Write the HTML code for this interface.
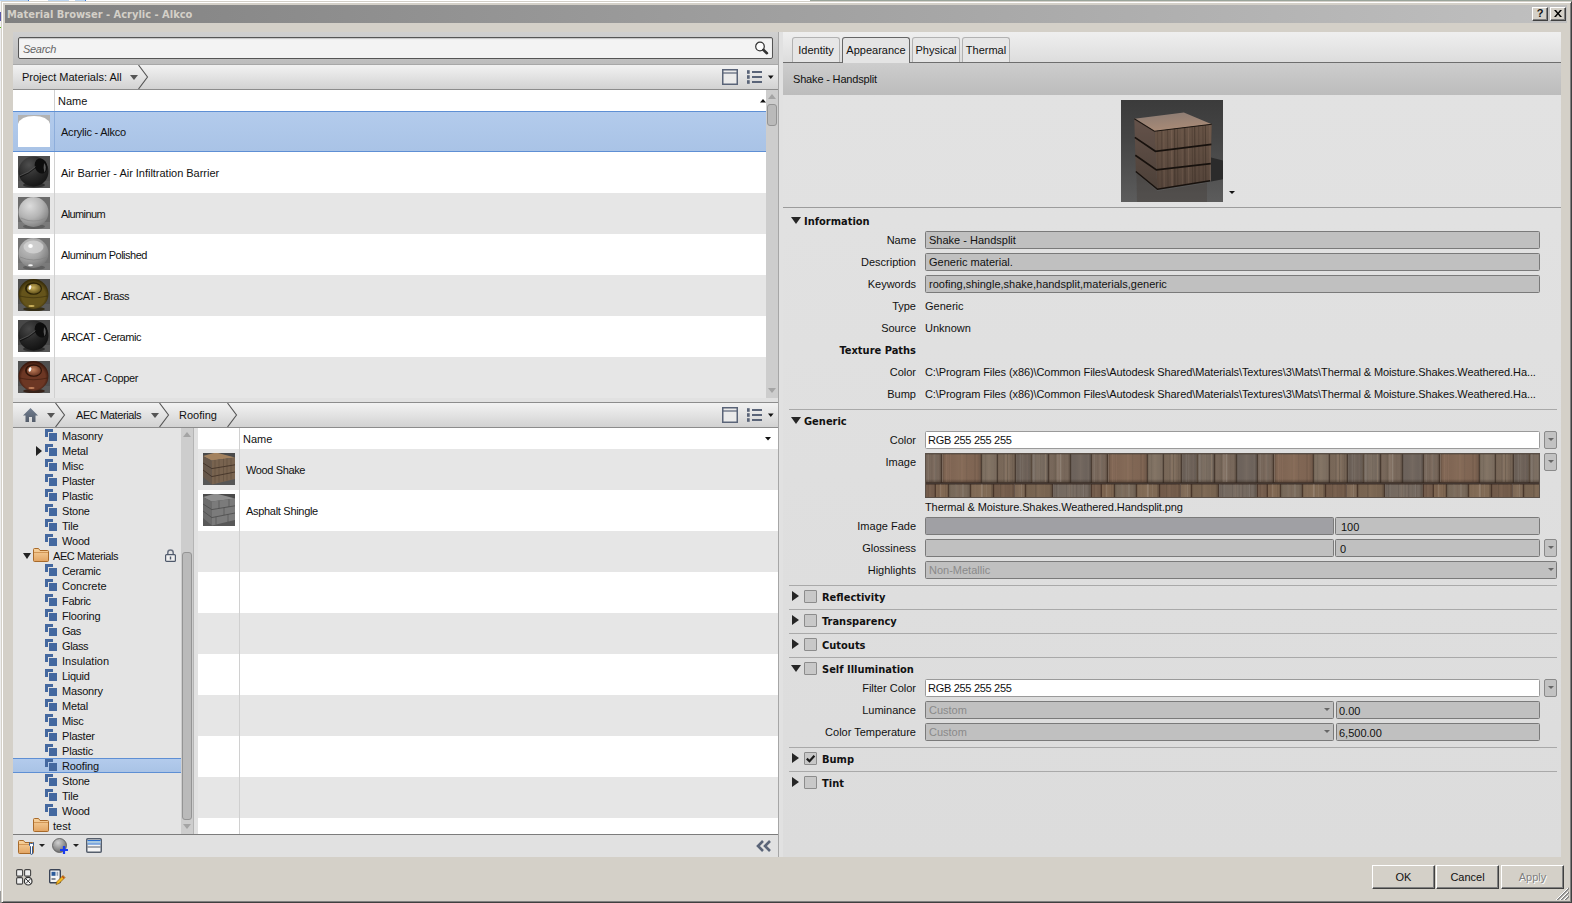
<!DOCTYPE html><html><head><meta charset="utf-8"><title>Material Browser</title><style>
*{box-sizing:border-box;margin:0;padding:0}
html,body{width:1572px;height:903px;overflow:hidden;background:#d4d0c8}
body{position:relative;font-family:"Liberation Sans",sans-serif;font-size:11px;color:#111;}
.a{position:absolute}
.t{position:absolute;height:16px;line-height:16px;white-space:nowrap}
.r{text-align:right}
.b{font-family:"DejaVu Sans Condensed","Liberation Sans",sans-serif;font-weight:bold;font-size:11px;margin-top:1px}
.fld{position:absolute;height:18px;border:1px solid #7a7a7a;border-radius:1.5px;background:#c0c0c0;line-height:17px;padding-left:3px;white-space:nowrap;overflow:hidden}
.wh{background:#fff;border-color:#9a9a9a;padding-left:2px;letter-spacing:-0.3px}
.dim{color:#8a8a8a}
.dd{position:absolute;width:13px;height:18px;border:1px solid #8a8a8a;border-radius:2px;background:#c2c2c2}
.dd:after,.arr:after{content:"";position:absolute;left:3px;top:6px;border:3px solid transparent;border-top:3px solid #666;border-bottom:0}
.arr{position:absolute;width:11px;height:16px}
.hl{position:absolute;height:1px;background:#a9a9a9}
.cb{position:absolute;width:13px;height:13px;border:1px solid #8c8c8c;border-radius:1px;background:#c8c8c8}
.tri-d{position:absolute;width:0;height:0;border-left:4.5px solid transparent;border-right:4.5px solid transparent;border-top:7px solid #222}
.tri-r{position:absolute;width:0;height:0;border-top:5px solid transparent;border-bottom:5px solid transparent;border-left:7px solid #222}
.row{position:absolute;height:41px}
.g{background:#e6e6e6}
.w{background:#fff}
.tab{position:absolute;top:37px;height:25px;border:1px solid #b2b2b2;border-bottom:0;border-radius:3px 3px 0 0;background:#e6e6e6;text-align:center;line-height:25px}
.btn{position:absolute;top:865px;width:63px;height:24px;background:#d4d0c8;border:1px solid;border-color:#fff #404040 #404040 #fff;box-shadow:inset -1px -1px 0 #808080;text-align:center;line-height:23px}
.ti{position:absolute;width:12px;height:12px}
.ti:before{content:"";position:absolute;left:0;top:0;width:5px;height:5px;border-left:3px solid #44689f;border-top:3px solid #44689f}
.ti:after{content:"";position:absolute;left:4px;top:4px;width:8px;height:8px;background:#44689f}
</style></head><body>
<div class="a" style="left:0px;top:0px;width:1572px;height:1px;background:linear-gradient(90deg,#bcd6f2 0,#bcd6f2 28px,#3a7ad8 28px,#3a7ad8 29px,#fff 29px,#fff 48px,#bcd6f2 48px,#bcd6f2 69px,#fff 69px,#fff 75px,#bcd6f2 75px,#bcd6f2 85px,#3a7ad8 85px,#3a7ad8 86px,#fff 86px,#fff 810px,#9aa49a 810px)"></div>
<div class="a" style="left:0px;top:1px;width:1px;height:902px;background:linear-gradient(#f4f4f4 0,#f4f4f4 11px,#5a58a8 11px,#5a58a8 20px,#f4f4f4 20px,#f4f4f4 26px,#5ac01a 26px,#5ac01a 27px,#eee 27px,#eee 890px,#999 890px)"></div>
<div class="a" style="left:1px;top:1px;width:1571px;height:902px;background:#d4d0c8;border:1px solid;border-color:#d4d0c8 #404040 #404040 #d4d0c8;box-shadow:inset 1px 1px 0 #fff,inset -1px -1px 0 #808080"></div>
<div class="a" style="left:5px;top:5px;width:1562px;height:18px;background:linear-gradient(90deg,#808080,#c0c0c0)"></div>
<div class="t b" style="left:7px;top:6px;color:#d4d0c8;font-size:11px">Material Browser - Acrylic - Alkco</div>
<div class="a" style="left:1532px;top:7px;width:16px;height:14px;background:#d4d0c8;border:1px solid;border-color:#fff #404040 #404040 #fff;box-shadow:inset -1px -1px 0 #808080;font:bold 11px/11px 'Liberation Sans',sans-serif;text-align:center">?</div>
<div class="a" style="left:1550px;top:7px;width:16px;height:14px;background:#d4d0c8;border:1px solid;border-color:#fff #404040 #404040 #fff;box-shadow:inset -1px -1px 0 #808080;font:bold 11px/11px 'Liberation Sans',sans-serif;text-align:center"></div>
<svg class="a" style="left:1554px;top:10px" width="8" height="7" viewBox="0 0 8 7"><path d="M0 0h2l2 2.5L6 0h2L5 3.5 8 7H6L4 4.5 2 7H0l3-3.5z" fill="#000"/></svg>
<div class="a" style="left:13px;top:32px;width:1548px;height:825px;background:#e1e1e1"></div>
<div class="a" style="left:13px;top:32px;width:766px;height:33px;background:linear-gradient(#d0d0d0,#bcbcbc)"></div>
<div class="a" style="left:18px;top:37px;width:755px;height:22px;background:#f3f3f3;border:1px solid #555;border-radius:2px;box-shadow:inset 0 1px 1px #c4c4c4"></div>
<div class="t " style="left:23px;top:41px;font-style:italic;color:#666;letter-spacing:-0.3px">Search</div>
<svg class="a" style="left:754px;top:41px" width="16" height="15" viewBox="0 0 16 15"><circle cx="6" cy="5.5" r="4.3" fill="#fdfdfd" stroke="#333" stroke-width="1.2"/><path d="M9.3 8.8l3.6 3.4" stroke="#333" stroke-width="2.6" stroke-linecap="round"/></svg>
<div class="a" style="left:13px;top:64px;width:766px;height:1px;background:#a8a8a8"></div>
<div class="a" style="left:13px;top:65px;width:766px;height:24px;background:linear-gradient(#f2f2f2,#e4e4e4 45%,#d2d2d2)"></div>
<div class="a" style="left:13px;top:89px;width:766px;height:1px;background:#8c8c8c"></div>
<div class="t " style="left:22px;top:69px;">Project Materials: All</div>
<svg class="a" style="left:130px;top:75px" width="8" height="5" viewBox="0 0 8 5"><path d="M0 0h8l-4.0 5z" fill="#555"/></svg>
<svg class="a" style="left:138px;top:65px" width="11" height="24" viewBox="0 0 11 24"><path d="M0.5 0L9.5 12.0 0.5 24" fill="none" stroke="#555" stroke-width="1.1"/></svg>
<svg class="a" style="left:722px;top:69px" width="54" height="16" viewBox="0 0 54 16"><rect x="0.75" y="0.75" width="14.5" height="14.5" fill="#ebebeb" stroke="#5a6478" stroke-width="1.5"/><rect x="1" y="3.4" width="14" height="1.2" fill="#5a6478"/><rect x="25" y="1.2" width="2.7" height="3.6" fill="#5a6478"/><rect x="30" y="2.0" width="10" height="2" fill="#5a6478"/><rect x="25" y="6.2" width="2.7" height="3.6" fill="#5a6478"/><rect x="30" y="7.0" width="10" height="2" fill="#5a6478"/><rect x="25" y="11.2" width="2.7" height="3.6" fill="#5a6478"/><rect x="30" y="12.0" width="10" height="2" fill="#5a6478"/><path d="M46 6.5h5.6l-2.8 3.4z" fill="#111"/></svg>
<div class="a" style="left:13px;top:90px;width:753px;height:21px;background:#fff"></div>
<div class="a" style="left:54px;top:90px;width:1px;height:308px;background:#d0d0d0"></div>
<div class="t " style="left:58px;top:93px;">Name</div>
<svg class="a" style="left:760px;top:99px" width="6" height="3.5" viewBox="0 0 6 3.5"><path d="M0 3.5h6L3 0z" fill="#111"/></svg>
<div class="a" style="left:13px;top:111px;width:753px;height:41px;background:linear-gradient(#b3cbec,#a9c3e6);border-top:1px solid #5e8fd4;border-bottom:1px solid #5e8fd4"></div>
<div class="a" style="left:54px;top:112px;width:1px;height:39px;background:#8eaedb"></div>
<svg class="a" style="left:18px;top:115px" width="32" height="32" viewBox="0 0 32 32"><rect width="32" height="32" fill="#b2b2b2"/><path d="M0 32V9Q2.5 1 16 1T32 9V32z" fill="#fff"/></svg>
<div class="t " style="left:61px;top:124px;letter-spacing:-0.23px">Acrylic - Alkco</div>
<div class="a" style="left:13px;top:152px;width:753px;height:41px;background:#fff"></div>
<div class="a" style="left:54px;top:152px;width:1px;height:41px;background:#d0d0d0"></div>
<svg class="a" style="left:18px;top:156px" width="32" height="32" viewBox="0 0 32 32"><defs><radialGradient id="gdark156" cx="35%" cy="28%" r="75%"><stop offset="0" stop-color="#4e4e4e"/><stop offset="0.55" stop-color="#2b2b2b"/><stop offset="1" stop-color="#161616"/></radialGradient></defs><rect width="32" height="32" fill="#4d4d4d"/><rect y="25" width="32" height="7" fill="#565656"/><ellipse cx="16" cy="29" rx="11" ry="2.5" fill="#2c2c2c"/><circle cx="15.5" cy="15.5" r="15" fill="url(#gdark156)"/><ellipse cx="23" cy="10" rx="6.2" ry="7.6" fill="#0d0d0d" transform="rotate(-20 23 10)"/><path d="M26 7Q29.5 11 26.5 16.5Q25 12 26 7z" fill="#5a5a5a"/><path d="M1.5 20Q11 16.5 17.5 10.5" stroke="#5a5a5a" stroke-width="0.7" fill="none"/><path d="M2 21Q11.5 17.5 18 11.5" stroke="#0a0a0a" stroke-width="0.7" fill="none"/></svg>
<div class="t " style="left:61px;top:165px;letter-spacing:-0.02px">Air Barrier - Air Infiltration Barrier</div>
<div class="a" style="left:13px;top:193px;width:753px;height:41px;background:#e6e6e6"></div>
<div class="a" style="left:54px;top:193px;width:1px;height:41px;background:#d0d0d0"></div>
<svg class="a" style="left:18px;top:197px" width="32" height="32" viewBox="0 0 32 32"><defs><radialGradient id="galu197" cx="38%" cy="30%" r="75%"><stop offset="0" stop-color="#dcdcdc"/><stop offset="0.55" stop-color="#b4b4b4"/><stop offset="1" stop-color="#7e7e7e"/></radialGradient></defs><rect width="32" height="32" fill="#6b6b6b"/><rect y="25" width="32" height="7" fill="#7a7a7a"/><ellipse cx="16" cy="29.5" rx="11" ry="2.5" fill="#5e5e5e"/><circle cx="15.5" cy="15" r="15" fill="url(#galu197)"/><path d="M2.5 21Q15.5 27 28.5 21" stroke="#8a8a8a" stroke-width="1.2" fill="none" opacity="0.7"/></svg>
<div class="t " style="left:61px;top:206px;letter-spacing:-0.61px">Aluminum</div>
<div class="a" style="left:13px;top:234px;width:753px;height:41px;background:#fff"></div>
<div class="a" style="left:54px;top:234px;width:1px;height:41px;background:#d0d0d0"></div>
<svg class="a" style="left:18px;top:238px" width="32" height="32" viewBox="0 0 32 32"><defs><radialGradient id="gpol238" cx="38%" cy="30%" r="75%"><stop offset="0" stop-color="#c4c4c4"/><stop offset="0.55" stop-color="#a4a4a4"/><stop offset="1" stop-color="#767676"/></radialGradient></defs><rect width="32" height="32" fill="#727272"/><rect y="25" width="32" height="7" fill="#7a7a7a"/><ellipse cx="16" cy="29.5" rx="11" ry="2.5" fill="#5e5e5e"/><circle cx="15.5" cy="15" r="15" fill="url(#gpol238)"/><ellipse cx="15.5" cy="9" rx="10" ry="6.5" fill="#d6d6d6" opacity="0.75"/><ellipse cx="12.5" cy="8" rx="2.3" ry="2" fill="#fff"/><ellipse cx="12.5" cy="27.3" rx="2.4" ry="1" fill="#f4f4f4"/><path d="M2 19Q15.5 25 29 19" stroke="#808080" stroke-width="1" fill="none" opacity="0.6"/></svg>
<div class="t " style="left:61px;top:247px;letter-spacing:-0.48px">Aluminum Polished</div>
<div class="a" style="left:13px;top:275px;width:753px;height:41px;background:#e6e6e6"></div>
<div class="a" style="left:54px;top:275px;width:1px;height:41px;background:#d0d0d0"></div>
<svg class="a" style="left:18px;top:279px" width="32" height="32" viewBox="0 0 32 32"><defs><radialGradient id="gbrass279" cx="50%" cy="55%" r="52%"><stop offset="0" stop-color="#65541b"/><stop offset="0.75" stop-color="#65541b"/><stop offset="1" stop-color="#382d09"/></radialGradient><radialGradient id="hbrass279" cx="45%" cy="40%" r="60%"><stop offset="0" stop-color="#ccb25e"/><stop offset="1" stop-color="#65541b"/></radialGradient></defs><rect width="32" height="32" fill="#4f4f4f"/><rect y="25" width="32" height="7" fill="#5a5a5a"/><ellipse cx="16" cy="30" rx="11" ry="2.2" fill="#2b2206" opacity="0.8"/><circle cx="15.5" cy="15" r="15" fill="url(#gbrass279)"/><ellipse cx="15.5" cy="9.5" rx="8.5" ry="6.3" fill="#2b2206"/><ellipse cx="15.8" cy="9.7" rx="7" ry="5" fill="url(#hbrass279)"/><ellipse cx="12" cy="8.5" rx="1.3" ry="2.4" fill="#fff" transform="rotate(15 12 8.5)"/><path d="M1.5 17Q15.5 20.5 29.5 17" stroke="#2b2206" stroke-width="1.2" fill="none" opacity="0.45"/><ellipse cx="13.5" cy="27" rx="3.2" ry="1" fill="#ccb25e"/></svg>
<div class="t " style="left:61px;top:288px;letter-spacing:-0.47px">ARCAT - Brass</div>
<div class="a" style="left:13px;top:316px;width:753px;height:41px;background:#fff"></div>
<div class="a" style="left:54px;top:316px;width:1px;height:41px;background:#d0d0d0"></div>
<svg class="a" style="left:18px;top:320px" width="32" height="32" viewBox="0 0 32 32"><defs><radialGradient id="gcer320" cx="35%" cy="28%" r="75%"><stop offset="0" stop-color="#474747"/><stop offset="0.55" stop-color="#252525"/><stop offset="1" stop-color="#121212"/></radialGradient></defs><rect width="32" height="32" fill="#474747"/><rect y="25" width="32" height="7" fill="#565656"/><ellipse cx="16" cy="29" rx="11" ry="2.5" fill="#2c2c2c"/><circle cx="15.5" cy="15.5" r="15" fill="url(#gcer320)"/><ellipse cx="23" cy="10" rx="6.2" ry="7.6" fill="#0d0d0d" transform="rotate(-20 23 10)"/><path d="M26 7Q29.5 11 26.5 16.5Q25 12 26 7z" fill="#5a5a5a"/><path d="M1.5 20Q11 16.5 17.5 10.5" stroke="#5a5a5a" stroke-width="0.7" fill="none"/><path d="M2 21Q11.5 17.5 18 11.5" stroke="#0a0a0a" stroke-width="0.7" fill="none"/></svg>
<div class="t " style="left:61px;top:329px;letter-spacing:-0.47px">ARCAT - Ceramic</div>
<div class="a" style="left:13px;top:357px;width:753px;height:41px;background:#e6e6e6"></div>
<div class="a" style="left:54px;top:357px;width:1px;height:41px;background:#d0d0d0"></div>
<svg class="a" style="left:18px;top:361px" width="32" height="32" viewBox="0 0 32 32"><defs><radialGradient id="gcop361" cx="50%" cy="55%" r="52%"><stop offset="0" stop-color="#6c3724"/><stop offset="0.75" stop-color="#6c3724"/><stop offset="1" stop-color="#3a180d"/></radialGradient><radialGradient id="hcop361" cx="45%" cy="40%" r="60%"><stop offset="0" stop-color="#c07f5b"/><stop offset="1" stop-color="#6c3724"/></radialGradient></defs><rect width="32" height="32" fill="#4f4f4f"/><rect y="25" width="32" height="7" fill="#5a5a5a"/><ellipse cx="16" cy="30" rx="11" ry="2.2" fill="#2e1409" opacity="0.8"/><circle cx="15.5" cy="15" r="15" fill="url(#gcop361)"/><ellipse cx="15.5" cy="9.5" rx="8.5" ry="6.3" fill="#2e1409"/><ellipse cx="15.8" cy="9.7" rx="7" ry="5" fill="url(#hcop361)"/><ellipse cx="12" cy="8.5" rx="1.3" ry="2.4" fill="#fff" transform="rotate(15 12 8.5)"/><path d="M1.5 17Q15.5 20.5 29.5 17" stroke="#2e1409" stroke-width="1.2" fill="none" opacity="0.45"/><ellipse cx="13.5" cy="27" rx="3.2" ry="1" fill="#c07f5b"/></svg>
<div class="t " style="left:61px;top:370px;letter-spacing:-0.37px">ARCAT - Copper</div>
<div class="a" style="left:766px;top:90px;width:12px;height:308px;background:#cdcdcd"></div>
<svg class="a" style="left:768px;top:94px" width="8" height="5" viewBox="0 0 8 5"><path d="M0 5h8L4 0z" fill="#a4a4a4"/></svg>
<svg class="a" style="left:768px;top:388px" width="8" height="5" viewBox="0 0 8 5"><path d="M0 0h8L4 5z" fill="#a4a4a4"/></svg>
<div class="a" style="left:767px;top:104px;width:10px;height:22px;background:#bababa;border:1px solid #949494;border-radius:3px"></div>
<div class="a" style="left:13px;top:402px;width:766px;height:1px;background:#8c8c8c"></div>
<div class="a" style="left:13px;top:403px;width:766px;height:24px;background:linear-gradient(#f2f2f2,#e4e4e4 45%,#d2d2d2)"></div>
<div class="a" style="left:13px;top:427px;width:766px;height:1px;background:#8c8c8c"></div>
<svg class="a" style="left:23px;top:408px" width="15" height="14" viewBox="0 0 15 14"><defs><linearGradient id="hg" x1="0" y1="0" x2="0" y2="1"><stop offset="0" stop-color="#727e90"/><stop offset="1" stop-color="#535c6a"/></linearGradient></defs><path d="M7.5 0L15 7.5H12.5V14H9V9H6V14H2.5V7.5H0z" fill="url(#hg)"/></svg>
<svg class="a" style="left:47px;top:413px" width="8" height="5" viewBox="0 0 8 5"><path d="M0 0h8l-4.0 5z" fill="#555"/></svg>
<svg class="a" style="left:55px;top:403px" width="11" height="24" viewBox="0 0 11 24"><path d="M0.5 0L9.5 12.0 0.5 24" fill="none" stroke="#555" stroke-width="1.1"/></svg>
<div class="t " style="left:76px;top:407px;letter-spacing:-0.4px">AEC Materials</div>
<svg class="a" style="left:151px;top:413px" width="8" height="5" viewBox="0 0 8 5"><path d="M0 0h8l-4.0 5z" fill="#555"/></svg>
<svg class="a" style="left:159px;top:403px" width="11" height="24" viewBox="0 0 11 24"><path d="M0.5 0L9.5 12.0 0.5 24" fill="none" stroke="#555" stroke-width="1.1"/></svg>
<div class="t " style="left:179px;top:407px;">Roofing</div>
<svg class="a" style="left:227px;top:403px" width="11" height="24" viewBox="0 0 11 24"><path d="M0.5 0L9.5 12.0 0.5 24" fill="none" stroke="#555" stroke-width="1.1"/></svg>
<svg class="a" style="left:722px;top:407px" width="54" height="16" viewBox="0 0 54 16"><rect x="0.75" y="0.75" width="14.5" height="14.5" fill="#ebebeb" stroke="#5a6478" stroke-width="1.5"/><rect x="1" y="3.4" width="14" height="1.2" fill="#5a6478"/><rect x="25" y="1.2" width="2.7" height="3.6" fill="#5a6478"/><rect x="30" y="2.0" width="10" height="2" fill="#5a6478"/><rect x="25" y="6.2" width="2.7" height="3.6" fill="#5a6478"/><rect x="30" y="7.0" width="10" height="2" fill="#5a6478"/><rect x="25" y="11.2" width="2.7" height="3.6" fill="#5a6478"/><rect x="30" y="12.0" width="10" height="2" fill="#5a6478"/><path d="M46 6.5h5.6l-2.8 3.4z" fill="#111"/></svg>
<div class="a" style="left:13px;top:428px;width:168px;height:406px;background:#e4e4e4"></div>
<div class="ti" style="left:45px;top:429px"></div>
<div class="t " style="left:62px;top:428px;letter-spacing:-0.2px">Masonry</div>
<div class="ti" style="left:45px;top:444px"></div>
<div class="t " style="left:62px;top:443px;letter-spacing:-0.2px">Metal</div>
<div class="tri-r" style="left:36px;top:446px;border-left-width:6px"></div>
<div class="ti" style="left:45px;top:459px"></div>
<div class="t " style="left:62px;top:458px;letter-spacing:-0.3px">Misc</div>
<div class="ti" style="left:45px;top:474px"></div>
<div class="t " style="left:62px;top:473px;letter-spacing:-0.2px">Plaster</div>
<div class="ti" style="left:45px;top:489px"></div>
<div class="t " style="left:62px;top:488px;letter-spacing:-0.2px">Plastic</div>
<div class="ti" style="left:45px;top:504px"></div>
<div class="t " style="left:62px;top:503px;letter-spacing:-0.2px">Stone</div>
<div class="ti" style="left:45px;top:519px"></div>
<div class="t " style="left:62px;top:518px;letter-spacing:-0.2px">Tile</div>
<div class="ti" style="left:45px;top:534px"></div>
<div class="t " style="left:62px;top:533px;letter-spacing:-0.2px">Wood</div>
<svg class="a" style="left:33px;top:548px" width="16" height="14" viewBox="0 0 16 14"><defs><linearGradient id="fg33548" x1="0" y1="0" x2="0" y2="1"><stop offset="0" stop-color="#f8d4a0"/><stop offset="1" stop-color="#e2a462"/></linearGradient></defs><path d="M0.5 1.5Q0.5 0.5 1.5 0.5H5.5L7 2.5H14.5Q15.5 2.5 15.5 3.5V12.5Q15.5 13.5 14.5 13.5H1.5Q0.5 13.5 0.5 12.5z" fill="url(#fg33548)" stroke="#a86a2a" stroke-width="1"/><path d="M1 4.5H15" stroke="#c98a48" stroke-width="0.8"/></svg>
<div class="t " style="left:53px;top:548px;letter-spacing:-0.4px">AEC Materials</div>
<div class="tri-d" style="left:23px;top:553px;border-left-width:4.5px;border-right-width:4.5px;border-top-width:6px"></div>
<div class="ti" style="left:45px;top:564px"></div>
<div class="t " style="left:62px;top:563px;letter-spacing:-0.33px">Ceramic</div>
<div class="ti" style="left:45px;top:579px"></div>
<div class="t " style="left:62px;top:578px;letter-spacing:0px">Concrete</div>
<div class="ti" style="left:45px;top:594px"></div>
<div class="t " style="left:62px;top:593px;letter-spacing:-0.3px">Fabric</div>
<div class="ti" style="left:45px;top:609px"></div>
<div class="t " style="left:62px;top:608px;letter-spacing:-0.15px">Flooring</div>
<div class="ti" style="left:45px;top:624px"></div>
<div class="t " style="left:62px;top:623px;letter-spacing:-0.5px">Gas</div>
<div class="ti" style="left:45px;top:639px"></div>
<div class="t " style="left:62px;top:638px;letter-spacing:-0.4px">Glass</div>
<div class="ti" style="left:45px;top:654px"></div>
<div class="t " style="left:62px;top:653px;letter-spacing:0px">Insulation</div>
<div class="ti" style="left:45px;top:669px"></div>
<div class="t " style="left:62px;top:668px;letter-spacing:-0.3px">Liquid</div>
<div class="ti" style="left:45px;top:684px"></div>
<div class="t " style="left:62px;top:683px;letter-spacing:-0.2px">Masonry</div>
<div class="ti" style="left:45px;top:699px"></div>
<div class="t " style="left:62px;top:698px;letter-spacing:-0.2px">Metal</div>
<div class="ti" style="left:45px;top:714px"></div>
<div class="t " style="left:62px;top:713px;letter-spacing:-0.3px">Misc</div>
<div class="ti" style="left:45px;top:729px"></div>
<div class="t " style="left:62px;top:728px;letter-spacing:-0.2px">Plaster</div>
<div class="ti" style="left:45px;top:744px"></div>
<div class="t " style="left:62px;top:743px;letter-spacing:-0.2px">Plastic</div>
<div class="a" style="left:13px;top:758px;width:168px;height:15px;background:linear-gradient(#b3cbec,#a9c3e6);border-top:1px solid #5e8fd4;border-bottom:1px solid #5e8fd4"></div>
<div class="ti" style="left:45px;top:759px"></div>
<div class="t " style="left:62px;top:758px;letter-spacing:-0.13px">Roofing</div>
<div class="ti" style="left:45px;top:774px"></div>
<div class="t " style="left:62px;top:773px;letter-spacing:-0.2px">Stone</div>
<div class="ti" style="left:45px;top:789px"></div>
<div class="t " style="left:62px;top:788px;letter-spacing:-0.2px">Tile</div>
<div class="ti" style="left:45px;top:804px"></div>
<div class="t " style="left:62px;top:803px;letter-spacing:-0.2px">Wood</div>
<svg class="a" style="left:33px;top:818px" width="16" height="14" viewBox="0 0 16 14"><defs><linearGradient id="fg33818" x1="0" y1="0" x2="0" y2="1"><stop offset="0" stop-color="#f8d4a0"/><stop offset="1" stop-color="#e2a462"/></linearGradient></defs><path d="M0.5 1.5Q0.5 0.5 1.5 0.5H5.5L7 2.5H14.5Q15.5 2.5 15.5 3.5V12.5Q15.5 13.5 14.5 13.5H1.5Q0.5 13.5 0.5 12.5z" fill="url(#fg33818)" stroke="#a86a2a" stroke-width="1"/><path d="M1 4.5H15" stroke="#c98a48" stroke-width="0.8"/></svg>
<div class="t " style="left:53px;top:818px;">test</div>
<svg class="a" style="left:165px;top:549px" width="11" height="13" viewBox="0 0 11 13"><path d="M2.8 6V3.6Q2.8 1 5.5 1T8.2 3.6V6" fill="none" stroke="#6a7282" stroke-width="1.5"/><rect x="0.6" y="5.6" width="9.8" height="6.8" rx="1" fill="#f0f0f0" stroke="#4e586a" stroke-width="1.2"/><path d="M5.5 7.5v3" stroke="#4e586a" stroke-width="1.4"/></svg>
<div class="a" style="left:181px;top:428px;width:12px;height:406px;background:#cdcdcd"></div>
<svg class="a" style="left:183px;top:432px" width="8" height="5" viewBox="0 0 8 5"><path d="M0 5h8L4 0z" fill="#a4a4a4"/></svg>
<svg class="a" style="left:183px;top:824px" width="8" height="5" viewBox="0 0 8 5"><path d="M0 0h8L4 5z" fill="#a4a4a4"/></svg>
<div class="a" style="left:182px;top:552px;width:10px;height:268px;background:#bababa;border:1px solid #949494;border-radius:3px"></div>
<div class="a" style="left:193px;top:428px;width:5px;height:406px;background:#e1e1e1;border-left:1px solid #b4b4b4"></div>
<div class="a" style="left:198px;top:428px;width:581px;height:21px;background:#fff"></div>
<div class="t " style="left:243px;top:431px;">Name</div>
<svg class="a" style="left:765px;top:437px" width="6" height="3.5" viewBox="0 0 6 3.5"><path d="M0 0h6L3 3.5z" fill="#111"/></svg>
<div class="a" style="left:198px;top:449px;width:581px;height:41px;background:#e6e6e6"></div>
<div class="a" style="left:198px;top:490px;width:581px;height:41px;background:#fff"></div>
<div class="a" style="left:198px;top:531px;width:581px;height:41px;background:#e6e6e6"></div>
<div class="a" style="left:198px;top:572px;width:581px;height:41px;background:#fff"></div>
<div class="a" style="left:198px;top:613px;width:581px;height:41px;background:#e6e6e6"></div>
<div class="a" style="left:198px;top:654px;width:581px;height:41px;background:#fff"></div>
<div class="a" style="left:198px;top:695px;width:581px;height:41px;background:#e6e6e6"></div>
<div class="a" style="left:198px;top:736px;width:581px;height:41px;background:#fff"></div>
<div class="a" style="left:198px;top:777px;width:581px;height:41px;background:#e6e6e6"></div>
<div class="a" style="left:198px;top:818px;width:581px;height:16px;background:#fff"></div>
<div class="a" style="left:239px;top:428px;width:1px;height:406px;background:#d0d0d0"></div>
<svg class="a" style="left:203px;top:453px" width="32" height="32" viewBox="0 0 32 32"><rect width="32" height="32" fill="#565656"/><path d="M0 0H10L0 3z" fill="#4a4a4a"/><path d="M14 0H32V4.6z" fill="#4a4a4a"/><path d="M0 3L11 0H15L32 4.6 8.6 7.6z" fill="#a3825f"/><path d="M0 3L8.6 7.6 9 31.4 0 24z" fill="#66574a"/><path d="M8.6 7.6L32 4.6V26L9 31.4z" fill="#78634f"/><path d="M0 10L8.8 15.6L32 11.8" stroke="#3a2c22" stroke-width="0.9" fill="none" opacity="0.85"/><path d="M0 17L8.8 23.6L32 19.0" stroke="#3a2c22" stroke-width="0.9" fill="none" opacity="0.85"/><path d="M12 6.8V30.3" stroke="#4a3a2c" stroke-width="0.6" opacity="0.5"/><path d="M16 6.3V29.4" stroke="#4a3a2c" stroke-width="0.6" opacity="0.5"/><path d="M20.5 5.7V28.3" stroke="#4a3a2c" stroke-width="0.6" opacity="0.5"/><path d="M24 5.2V27.5" stroke="#4a3a2c" stroke-width="0.6" opacity="0.5"/><path d="M28 4.7V26.5" stroke="#4a3a2c" stroke-width="0.6" opacity="0.5"/></svg>
<div class="t " style="left:246px;top:462px;letter-spacing:-0.38px">Wood Shake</div>
<svg class="a" style="left:203px;top:494px" width="32" height="32" viewBox="0 0 32 32"><rect width="32" height="32" fill="#585858"/><path d="M0 0H10L0 3z" fill="#4a4a4a"/><path d="M14 0H32V4.6z" fill="#4a4a4a"/><path d="M0 3L11 0H15L32 4.6 8.6 7.6z" fill="#8e8e8e"/><path d="M0 3L8.6 7.6 9 31.4 0 24z" fill="#6c6c6c"/><path d="M8.6 7.6L32 4.6V26L9 31.4z" fill="#7b7b7b"/><path d="M0 10L8.8 15.6L32 11.8" stroke="#4a4a4a" stroke-width="0.9" fill="none" opacity="0.85"/><path d="M0 17L8.8 23.6L32 19.0" stroke="#4a4a4a" stroke-width="0.9" fill="none" opacity="0.85"/><path d="M16 6.7v7.5" stroke="#4a4a4a" stroke-width="0.7" opacity="0.8"/><path d="M26 5.4v7.5" stroke="#4a4a4a" stroke-width="0.7" opacity="0.8"/><path d="M21 13.6v7.5" stroke="#4a4a4a" stroke-width="0.7" opacity="0.8"/><path d="M13 22.8v7.5" stroke="#4a4a4a" stroke-width="0.7" opacity="0.8"/><path d="M25 20.5v7.5" stroke="#4a4a4a" stroke-width="0.7" opacity="0.8"/></svg>
<div class="t " style="left:246px;top:503px;letter-spacing:-0.3px">Asphalt Shingle</div>
<div class="a" style="left:13px;top:834px;width:766px;height:1px;background:#7c7c7c"></div>
<div class="a" style="left:13px;top:835px;width:766px;height:22px;background:#e1e1e1"></div>
<svg class="a" style="left:18px;top:840px" width="16" height="14" viewBox="0 0 16 14"><defs><linearGradient id="fg18840" x1="0" y1="0" x2="0" y2="1"><stop offset="0" stop-color="#f8d4a0"/><stop offset="1" stop-color="#e2a462"/></linearGradient></defs><path d="M0.5 1.5Q0.5 0.5 1.5 0.5H5.5L7 2.5H14.5Q15.5 2.5 15.5 3.5V12.5Q15.5 13.5 14.5 13.5H1.5Q0.5 13.5 0.5 12.5z" fill="url(#fg18840)" stroke="#a86a2a" stroke-width="1"/><path d="M1 4.5H15" stroke="#c98a48" stroke-width="0.8"/></svg>
<svg class="a" style="left:28px;top:842px" width="7" height="13" viewBox="0 0 7 13"><path d="M1.5 0.5V3.5L2.5 4.5V11Q2.5 12.5 3.5 12.5T4.5 11V4.5L5.5 3.5V0.5L4.5 1.5H2.5z" fill="#fff" stroke="#3a5a8a" stroke-width="1"/></svg>
<svg class="a" style="left:39px;top:844px" width="6" height="3" viewBox="0 0 6 3"><path d="M0 0h6l-3.0 3z" fill="#222"/></svg>
<svg class="a" style="left:52px;top:838px" width="17" height="17" viewBox="0 0 17 17"><defs><radialGradient id="sp" cx="40%" cy="30%" r="70%"><stop offset="0" stop-color="#d0d0d0"/><stop offset="1" stop-color="#6e6e6e"/></radialGradient></defs><circle cx="7.5" cy="7.5" r="7" fill="url(#sp)" stroke="#555" stroke-width="0.8"/><path d="M12 8v8M8 12h8" stroke="#1a3cf0" stroke-width="2.2"/></svg>
<svg class="a" style="left:73px;top:844px" width="6" height="3" viewBox="0 0 6 3"><path d="M0 0h6l-3.0 3z" fill="#222"/></svg>
<svg class="a" style="left:86px;top:838px" width="16" height="15" viewBox="0 0 16 15"><rect x="0.75" y="0.75" width="14.5" height="13.5" rx="1" fill="#f4f4f4" stroke="#555e6c" stroke-width="1.5"/><rect x="1.5" y="2" width="13" height="3.5" fill="#a8c8e0"/><rect x="1.5" y="2" width="13" height="1" fill="#2a6fd0"/><rect x="1.5" y="5.5" width="13" height="1" fill="#2a6fd0"/><rect x="1.5" y="8.5" width="13" height="1" fill="#555e6c"/></svg>
<svg class="a" style="left:756px;top:840px" width="16" height="12" viewBox="0 0 16 12"><path d="M7 1L2 6l5 5M14 1L9 6l5 5" fill="none" stroke="#5a6478" stroke-width="2.6"/></svg>
<div class="a" style="left:778px;top:32px;width:1px;height:825px;background:#a6a6a6"></div>
<div class="a" style="left:783px;top:32px;width:778px;height:31px;background:linear-gradient(#efefef,#dcdcdc)"></div>
<div class="a" style="left:783px;top:62px;width:778px;height:1px;background:#6e6e6e"></div>
<div class="tab" style="left:792px;width:48px">Identity</div>
<div class="tab" style="left:912px;width:48px">Physical</div>
<div class="tab" style="left:962px;width:48px">Thermal</div>
<div class="tab" style="left:842px;width:68px;top:37px;height:26px;border-color:#666;background:#e4e4e4;line-height:25px">Appearance</div>
<div class="a" style="left:783px;top:95px;width:778px;height:762px;background:linear-gradient(#e2e2e2,#dcdcdc)"></div>
<div class="a" style="left:783px;top:63px;width:778px;height:32px;background:linear-gradient(#cdcdcd,#bcbcbc)"></div>
<div class="t " style="left:793px;top:71px;letter-spacing:-0.17px">Shake - Handsplit</div>
<svg class="a" style="left:1121px;top:100px" width="102" height="102" viewBox="0 0 102 102"><defs><linearGradient id="pbg" x1="0" y1="0" x2="0" y2="1"><stop offset="0" stop-color="#3b3b3b"/><stop offset="0.4" stop-color="#454545"/><stop offset="1" stop-color="#5c5c5c"/></linearGradient><linearGradient id="ptop" x1="0" y1="0" x2="0.3" y2="1"><stop offset="0" stop-color="#8a7b73"/><stop offset="1" stop-color="#a88a76"/></linearGradient><linearGradient id="pl" x1="0" y1="0" x2="0" y2="1"><stop offset="0" stop-color="#64524a"/><stop offset="1" stop-color="#4c4038"/></linearGradient><linearGradient id="pr" x1="0" y1="0" x2="0" y2="1"><stop offset="0" stop-color="#685446"/><stop offset="1" stop-color="#54443a"/></linearGradient></defs>
<rect width="102" height="102" fill="url(#pbg)"/>
<path d="M90 57.5L102 60.6V79.2L90 81.5z" fill="#2b2b2b"/>
<path d="M13.3 18.8L62.9 12.6 90.8 24.2 33.4 31.2z" fill="url(#ptop)"/>
<path d="M13.3 18.8L33.4 31.2 36.5 89.3 14.8 71.5z" fill="url(#pl)"/>
<path d="M33.4 31.2L90.8 24.2 89.2 80.8 36.5 89.3z" fill="url(#pr)"/><path d="M36.5 30.8L36.9 88.8" stroke="#3a2c24" stroke-width="0.6" opacity="0.34"/><path d="M40.6 30.3L41.0 88.2" stroke="#3a2c24" stroke-width="1.2" opacity="0.27"/><path d="M42.8 30.1L43.2 87.9" stroke="#8a7060" stroke-width="0.9" opacity="0.39"/><path d="M46.6 29.6L47.0 87.3" stroke="#3a2c24" stroke-width="0.9" opacity="0.39"/><path d="M50.7 29.1L51.1 86.7" stroke="#8a7060" stroke-width="1.2" opacity="0.47"/><path d="M53.5 28.8L53.9 86.3" stroke="#2a2018" stroke-width="1.2" opacity="0.35"/><path d="M56.4 28.4L56.8 85.9" stroke="#2a2018" stroke-width="0.6" opacity="0.44"/><path d="M61.0 27.8L61.4 85.2" stroke="#8a7060" stroke-width="0.6" opacity="0.46"/><path d="M63.7 27.5L64.1 84.8" stroke="#3a2c24" stroke-width="1.2" opacity="0.48"/><path d="M67.4 27.1L67.8 84.3" stroke="#8a7060" stroke-width="0.9" opacity="0.43"/><path d="M71.2 26.6L71.6 83.7" stroke="#2a2018" stroke-width="0.9" opacity="0.27"/><path d="M73.7 26.3L74.1 83.3" stroke="#2a2018" stroke-width="0.9" opacity="0.49"/><path d="M77.7 25.8L78.1 82.7" stroke="#3a2c24" stroke-width="0.9" opacity="0.36"/><path d="M81.9 25.3L82.3 82.1" stroke="#3a2c24" stroke-width="0.9" opacity="0.38"/><path d="M84.4 25.0L84.8 81.7" stroke="#2a2018" stroke-width="0.9" opacity="0.42"/><path d="M88.9 24.4L89.3 81.1" stroke="#8a7060" stroke-width="1.2" opacity="0.42"/><path d="M13.8 37.4L34.4 51.3 90.4 44.3M14.3 55.2L35.4 69.9 89.8 63.7" stroke="#17110d" stroke-width="1.7" fill="none"/>
<path d="M13.3 18.8L33.4 31.2 90.8 24.2" stroke="#1e1712" stroke-width="1.1" fill="none"/>
<path d="M14.8 71.5L36.5 89.3 89.2 80.8" stroke="#17110d" stroke-width="1.5" fill="none"/>
<path d="M15.5 73L36.5 91 86 83V102H16z" fill="#3e3630" opacity="0.3"/>
</svg>
<svg class="a" style="left:1229px;top:191px" width="6" height="3" viewBox="0 0 6 3"><path d="M0 0h6l-3.0 3z" fill="#111"/></svg>
<div class="a" style="left:783px;top:207px;width:778px;height:1px;background:#9c9c9c"></div>
<svg class="a" style="left:791px;top:217px" width="10" height="7" viewBox="0 0 10 7"><path d="M0 0h10L5 7z" fill="#262626"/></svg>
<div class="t b" style="left:804px;top:213px;">Information</div>
<div class="t r " style="left:716px;width:200px;top:232px;">Name</div>
<div class="fld" style="left:925px;top:231px;width:615px;">Shake - Handsplit</div>
<div class="t r " style="left:716px;width:200px;top:254px;">Description</div>
<div class="fld" style="left:925px;top:253px;width:615px;">Generic material.</div>
<div class="t r " style="left:716px;width:200px;top:276px;">Keywords</div>
<div class="fld" style="left:925px;top:275px;width:615px;">roofing,shingle,shake,handsplit,materials,generic</div>
<div class="t r " style="left:716px;width:200px;top:298px;">Type</div>
<div class="t " style="left:925px;top:298px;">Generic</div>
<div class="t r " style="left:716px;width:200px;top:320px;">Source</div>
<div class="t " style="left:925px;top:320px;">Unknown</div>
<div class="t r b" style="left:716px;width:200px;top:342px;">Texture Paths</div>
<div class="t r " style="left:716px;width:200px;top:364px;">Color</div>
<div class="t " style="left:925px;top:364px;letter-spacing:-0.095px">C:\Program Files (x86)\Common Files\Autodesk Shared\Materials\Textures\3\Mats\Thermal &amp; Moisture.Shakes.Weathered.Ha...</div>
<div class="t r " style="left:716px;width:200px;top:386px;">Bump</div>
<div class="t " style="left:925px;top:386px;letter-spacing:-0.095px">C:\Program Files (x86)\Common Files\Autodesk Shared\Materials\Textures\3\Mats\Thermal &amp; Moisture.Shakes.Weathered.Ha...</div>
<div class="hl" style="left:789px;top:409px;width:768px"></div>
<svg class="a" style="left:791px;top:417px" width="10" height="7" viewBox="0 0 10 7"><path d="M0 0h10L5 7z" fill="#262626"/></svg>
<div class="t b" style="left:804px;top:413px;">Generic</div>
<div class="t r " style="left:716px;width:200px;top:432px;">Color</div>
<div class="fld wh" style="left:925px;top:431px;width:615px;">RGB 255 255 255</div>
<div class="dd" style="left:1544px;top:431px"></div>
<div class="t r " style="left:716px;width:200px;top:454px;">Image</div>
<div class="dd" style="left:1544px;top:453px"></div>
<svg class="a" style="left:925px;top:453px" width="615" height="45" viewBox="0 0 615 45"><defs><linearGradient id="shd" x1="0" y1="0" x2="1" y2="0"><stop offset="0" stop-color="#2a1e16" stop-opacity="0.4"/><stop offset="0.1" stop-color="#2a1e16" stop-opacity="0"/><stop offset="0.5" stop-color="#e0c0a0" stop-opacity="0.07"/><stop offset="0.9" stop-color="#2a1e16" stop-opacity="0"/><stop offset="1" stop-color="#2a1e16" stop-opacity="0.35"/></linearGradient><linearGradient id="shv" x1="0" y1="0" x2="0" y2="1"><stop offset="0" stop-color="#2a1e16" stop-opacity="0"/><stop offset="1" stop-color="#2a1e16" stop-opacity="0.5"/></linearGradient><pattern id="shk" width="166" height="44" patternUnits="userSpaceOnUse"><rect x="0" y="0" width="16" height="30" fill="#77675b"/><rect x="0" y="0" width="1" height="30" fill="#4a3c32" opacity="0.7"/><rect x="0" y="31" width="10" height="13" fill="#735c4c"/><rect x="0" y="31" width="1" height="13" fill="#4a3428" opacity="0.7"/><rect x="16" y="0" width="40" height="30" fill="#806654"/><rect x="16" y="0" width="1" height="30" fill="#4a3c32" opacity="0.7"/><rect x="10" y="31" width="13" height="13" fill="#7e6651"/><rect x="10" y="31" width="1" height="13" fill="#4a3428" opacity="0.7"/><rect x="56" y="0" width="16" height="30" fill="#7e7062"/><rect x="56" y="0" width="1" height="30" fill="#4a3c32" opacity="0.7"/><rect x="23" y="31" width="22" height="13" fill="#796a5b"/><rect x="23" y="31" width="1" height="13" fill="#4a3428" opacity="0.7"/><rect x="72" y="0" width="18" height="30" fill="#796859"/><rect x="72" y="0" width="1" height="30" fill="#4a3c32" opacity="0.7"/><rect x="45" y="31" width="23" height="13" fill="#806a55"/><rect x="45" y="31" width="1" height="13" fill="#4a3428" opacity="0.7"/><rect x="90" y="0" width="16" height="30" fill="#6a5f57"/><rect x="90" y="0" width="1" height="30" fill="#4a3c32" opacity="0.7"/><rect x="68" y="31" width="21" height="13" fill="#725b4a"/><rect x="68" y="31" width="1" height="13" fill="#4a3428" opacity="0.7"/><rect x="106" y="0" width="17" height="30" fill="#766a5f"/><rect x="106" y="0" width="1" height="30" fill="#4a3c32" opacity="0.7"/><rect x="89" y="31" width="11" height="13" fill="#7f6a57"/><rect x="89" y="31" width="1" height="13" fill="#4a3428" opacity="0.7"/><rect x="123" y="0" width="22" height="30" fill="#78685b"/><rect x="123" y="0" width="1" height="30" fill="#4a3c32" opacity="0.7"/><rect x="100" y="31" width="27" height="13" fill="#786451"/><rect x="100" y="31" width="1" height="13" fill="#4a3428" opacity="0.7"/><rect x="145" y="0" width="21" height="30" fill="#6d635c"/><rect x="145" y="0" width="1" height="30" fill="#4a3c32" opacity="0.7"/><rect x="127" y="31" width="39" height="13" fill="#756a61"/><rect x="127" y="31" width="1" height="13" fill="#4a3428" opacity="0.7"/><rect x="0" y="0" width="16" height="30" fill="url(#shd)"/><rect x="0" y="31" width="10" height="13" fill="url(#shd)"/><rect x="16" y="0" width="40" height="30" fill="url(#shd)"/><rect x="10" y="31" width="13" height="13" fill="url(#shd)"/><rect x="56" y="0" width="16" height="30" fill="url(#shd)"/><rect x="23" y="31" width="22" height="13" fill="url(#shd)"/><rect x="72" y="0" width="18" height="30" fill="url(#shd)"/><rect x="45" y="31" width="23" height="13" fill="url(#shd)"/><rect x="90" y="0" width="16" height="30" fill="url(#shd)"/><rect x="68" y="31" width="21" height="13" fill="url(#shd)"/><rect x="106" y="0" width="17" height="30" fill="url(#shd)"/><rect x="89" y="31" width="11" height="13" fill="url(#shd)"/><rect x="123" y="0" width="22" height="30" fill="url(#shd)"/><rect x="100" y="31" width="27" height="13" fill="url(#shd)"/><rect x="145" y="0" width="21" height="30" fill="url(#shd)"/><rect x="127" y="31" width="39" height="13" fill="url(#shd)"/><rect x="0" y="26" width="166" height="4" fill="url(#shv)"/><rect x="0" y="29.5" width="166" height="2" fill="#33261f" opacity="0.9"/><rect x="0" y="0" width="166" height="1.5" fill="#4a3e36" opacity="0.6"/><rect x="53.8" y="1" width="0.8" height="28" fill="#fff" opacity="0.06"/><rect x="89.0" y="31" width="1" height="13" fill="#fff" opacity="0.13"/><rect x="35.6" y="1" width="0.8" height="28" fill="#c8a888" opacity="0.06"/><rect x="15.1" y="31" width="0.6" height="13" fill="#fff" opacity="0.14"/><rect x="104.7" y="1" width="1" height="28" fill="#c8a888" opacity="0.05"/><rect x="36.7" y="1" width="0.8" height="28" fill="#c8a888" opacity="0.06"/><rect x="19.6" y="31" width="1" height="13" fill="#000" opacity="0.06"/><rect x="94.8" y="1" width="0.8" height="28" fill="#fff" opacity="0.10"/><rect x="10.4" y="1" width="1" height="28" fill="#000" opacity="0.09"/><rect x="88.3" y="31" width="0.8" height="13" fill="#c8a888" opacity="0.08"/><rect x="41.2" y="1" width="1" height="28" fill="#000" opacity="0.06"/><rect x="49.8" y="31" width="0.8" height="13" fill="#c8a888" opacity="0.08"/><rect x="162.7" y="1" width="1" height="28" fill="#c8a888" opacity="0.06"/><rect x="56.8" y="31" width="0.8" height="13" fill="#fff" opacity="0.14"/><rect x="12.9" y="31" width="0.8" height="13" fill="#3a2a1c" opacity="0.10"/><rect x="96.3" y="31" width="0.6" height="13" fill="#fff" opacity="0.14"/><rect x="78.7" y="1" width="0.6" height="28" fill="#3a2a1c" opacity="0.11"/><rect x="164.9" y="31" width="0.8" height="13" fill="#c8a888" opacity="0.13"/><rect x="57.6" y="31" width="0.8" height="13" fill="#000" opacity="0.10"/><rect x="82.0" y="1" width="0.8" height="28" fill="#000" opacity="0.12"/><rect x="66.1" y="31" width="0.6" height="13" fill="#000" opacity="0.09"/><rect x="91.2" y="1" width="0.8" height="28" fill="#3a2a1c" opacity="0.11"/><rect x="163.8" y="31" width="0.6" height="13" fill="#000" opacity="0.06"/><rect x="25.1" y="1" width="0.6" height="28" fill="#c8a888" opacity="0.12"/><rect x="30.3" y="31" width="0.6" height="13" fill="#000" opacity="0.09"/><rect x="61.3" y="31" width="0.6" height="13" fill="#fff" opacity="0.09"/><rect x="144.6" y="31" width="0.8" height="13" fill="#c8a888" opacity="0.09"/><rect x="79.9" y="31" width="0.6" height="13" fill="#000" opacity="0.06"/><rect x="34.7" y="1" width="0.6" height="28" fill="#3a2a1c" opacity="0.10"/><rect x="17.0" y="1" width="1" height="28" fill="#fff" opacity="0.14"/><rect x="101.9" y="1" width="0.6" height="28" fill="#c8a888" opacity="0.06"/><rect x="41.9" y="31" width="1" height="13" fill="#3a2a1c" opacity="0.09"/><rect x="19.1" y="31" width="0.8" height="13" fill="#c8a888" opacity="0.09"/><rect x="14.3" y="1" width="1" height="28" fill="#3a2a1c" opacity="0.12"/><rect x="79.5" y="1" width="1" height="28" fill="#fff" opacity="0.07"/><rect x="158.0" y="31" width="0.6" height="13" fill="#fff" opacity="0.12"/><rect x="49.5" y="1" width="1" height="28" fill="#3a2a1c" opacity="0.10"/><rect x="150.8" y="31" width="0.6" height="13" fill="#3a2a1c" opacity="0.11"/><rect x="101.8" y="1" width="0.6" height="28" fill="#c8a888" opacity="0.12"/><rect x="37.6" y="31" width="0.8" height="13" fill="#fff" opacity="0.14"/><rect x="131.2" y="31" width="0.8" height="13" fill="#000" opacity="0.11"/><rect x="158.8" y="31" width="1" height="13" fill="#3a2a1c" opacity="0.14"/><rect x="60.5" y="1" width="0.6" height="28" fill="#000" opacity="0.09"/><rect x="56.1" y="31" width="1" height="13" fill="#fff" opacity="0.09"/><rect x="108.4" y="1" width="1" height="28" fill="#fff" opacity="0.13"/><rect x="129.9" y="1" width="0.8" height="28" fill="#000" opacity="0.09"/><rect x="105.5" y="1" width="1" height="28" fill="#c8a888" opacity="0.09"/><rect x="123.4" y="1" width="1" height="28" fill="#000" opacity="0.07"/><rect x="21.1" y="1" width="1" height="28" fill="#c8a888" opacity="0.12"/><rect x="24.3" y="31" width="1" height="13" fill="#3a2a1c" opacity="0.06"/><rect x="91.0" y="1" width="0.6" height="28" fill="#fff" opacity="0.10"/><rect x="155.0" y="31" width="0.6" height="13" fill="#000" opacity="0.05"/><rect x="35.3" y="1" width="1" height="28" fill="#3a2a1c" opacity="0.07"/><rect x="69.6" y="1" width="0.6" height="28" fill="#3a2a1c" opacity="0.13"/><rect x="110.0" y="31" width="1" height="13" fill="#000" opacity="0.10"/><rect x="86.9" y="1" width="0.8" height="28" fill="#000" opacity="0.10"/><rect x="128.8" y="1" width="0.6" height="28" fill="#000" opacity="0.09"/><rect x="120.4" y="1" width="0.8" height="28" fill="#c8a888" opacity="0.12"/><rect x="17.6" y="1" width="0.6" height="28" fill="#000" opacity="0.07"/><rect x="128.2" y="31" width="1" height="13" fill="#fff" opacity="0.12"/><rect x="151.5" y="31" width="0.8" height="13" fill="#000" opacity="0.11"/><rect x="75.1" y="31" width="1" height="13" fill="#000" opacity="0.11"/><rect x="145.5" y="31" width="1" height="13" fill="#000" opacity="0.13"/><rect x="22.8" y="1" width="0.8" height="28" fill="#c8a888" opacity="0.08"/><rect x="111.4" y="31" width="0.6" height="13" fill="#000" opacity="0.11"/><rect x="130.1" y="1" width="1" height="28" fill="#3a2a1c" opacity="0.06"/><rect x="146.6" y="31" width="0.6" height="13" fill="#fff" opacity="0.09"/><rect x="80.9" y="1" width="0.6" height="28" fill="#c8a888" opacity="0.14"/><rect x="67.0" y="31" width="0.6" height="13" fill="#3a2a1c" opacity="0.08"/><rect x="119.9" y="1" width="0.8" height="28" fill="#c8a888" opacity="0.09"/><rect x="3.0" y="31" width="1" height="13" fill="#3a2a1c" opacity="0.10"/><rect x="10.7" y="1" width="0.6" height="28" fill="#fff" opacity="0.07"/><rect x="6.6" y="1" width="0.8" height="28" fill="#000" opacity="0.12"/><rect x="141.0" y="31" width="0.8" height="13" fill="#000" opacity="0.10"/><rect x="85.5" y="31" width="1" height="13" fill="#3a2a1c" opacity="0.06"/><rect x="9.5" y="1" width="0.8" height="28" fill="#fff" opacity="0.07"/><rect x="2.8" y="1" width="0.8" height="28" fill="#fff" opacity="0.10"/><rect x="36.9" y="31" width="0.6" height="13" fill="#c8a888" opacity="0.05"/><rect x="165.1" y="31" width="0.8" height="13" fill="#000" opacity="0.05"/><rect x="117.8" y="1" width="0.6" height="28" fill="#3a2a1c" opacity="0.05"/><rect x="33.5" y="31" width="1" height="13" fill="#3a2a1c" opacity="0.10"/><rect x="34.2" y="31" width="1" height="13" fill="#000" opacity="0.07"/><rect x="133.4" y="31" width="0.6" height="13" fill="#fff" opacity="0.05"/><rect x="83.9" y="1" width="1" height="28" fill="#c8a888" opacity="0.07"/><rect x="74.2" y="31" width="1" height="13" fill="#c8a888" opacity="0.10"/><rect x="147.5" y="31" width="1" height="13" fill="#000" opacity="0.14"/><rect x="56.9" y="1" width="0.8" height="28" fill="#3a2a1c" opacity="0.14"/><rect x="138.9" y="1" width="0.6" height="28" fill="#3a2a1c" opacity="0.09"/><rect x="9.2" y="31" width="1" height="13" fill="#3a2a1c" opacity="0.10"/><rect x="115.0" y="1" width="0.8" height="28" fill="#000" opacity="0.06"/><rect x="74.0" y="31" width="0.8" height="13" fill="#3a2a1c" opacity="0.14"/><rect x="90.8" y="1" width="0.6" height="28" fill="#3a2a1c" opacity="0.07"/><rect x="30.4" y="31" width="0.8" height="13" fill="#fff" opacity="0.09"/><rect x="83.5" y="1" width="0.6" height="28" fill="#fff" opacity="0.06"/><rect x="135.6" y="1" width="0.8" height="28" fill="#fff" opacity="0.09"/><rect x="49.7" y="1" width="0.6" height="28" fill="#000" opacity="0.11"/><rect x="118.9" y="31" width="0.8" height="13" fill="#c8a888" opacity="0.06"/><rect x="120.2" y="1" width="0.6" height="28" fill="#c8a888" opacity="0.12"/><rect x="134.8" y="1" width="1" height="28" fill="#fff" opacity="0.12"/><rect x="97.0" y="1" width="0.6" height="28" fill="#fff" opacity="0.05"/><rect x="105.8" y="1" width="0.8" height="28" fill="#c8a888" opacity="0.10"/><rect x="104.2" y="1" width="0.8" height="28" fill="#3a2a1c" opacity="0.05"/><rect x="132.4" y="1" width="1" height="28" fill="#fff" opacity="0.12"/><rect x="78.7" y="1" width="0.8" height="28" fill="#000" opacity="0.12"/><rect x="34.1" y="31" width="0.8" height="13" fill="#c8a888" opacity="0.06"/><rect x="151.1" y="31" width="0.6" height="13" fill="#000" opacity="0.06"/><rect x="24.5" y="31" width="1" height="13" fill="#3a2a1c" opacity="0.11"/><rect x="22.2" y="31" width="0.6" height="13" fill="#c8a888" opacity="0.07"/><rect x="111.6" y="1" width="1" height="28" fill="#c8a888" opacity="0.08"/><rect x="85.7" y="31" width="0.8" height="13" fill="#c8a888" opacity="0.12"/></pattern></defs><rect x="0.5" y="0.5" width="614" height="44" fill="url(#shk)" stroke="#5a5048" stroke-width="1"/></svg>
<div class="t " style="left:925px;top:499px;letter-spacing:-0.1px">Thermal &amp; Moisture.Shakes.Weathered.Handsplit.png</div>
<div class="t r " style="left:716px;width:200px;top:518px;">Image Fade</div>
<div class="fld" style="left:925px;top:517px;width:409px;background:#a0a0a4"></div>
<div class="fld" style="left:1335px;top:517px;width:205px;padding:1px 0 0 5px">100</div>
<div class="t r " style="left:716px;width:200px;top:540px;">Glossiness</div>
<div class="fld" style="left:925px;top:539px;width:409px;"></div>
<div class="fld" style="left:1335px;top:539px;width:205px;padding:1px 0 0 4px">0</div>
<div class="dd" style="left:1544px;top:539px"></div>
<div class="t r " style="left:716px;width:200px;top:562px;">Highlights</div>
<div class="fld dim" style="left:925px;top:561px;width:632px;">Non-Metallic</div>
<div class="arr" style="left:1545px;top:562px"></div>
<div class="hl" style="left:789px;top:585px;width:768px"></div>
<div class="hl" style="left:789px;top:609px;width:768px"></div>
<div class="hl" style="left:789px;top:633px;width:768px"></div>
<div class="hl" style="left:789px;top:657px;width:768px"></div>
<div class="hl" style="left:789px;top:747px;width:768px"></div>
<div class="hl" style="left:789px;top:771px;width:768px"></div>
<svg class="a" style="left:792px;top:591px" width="7" height="10" viewBox="0 0 7 10"><path d="M0 0v10L7 5z" fill="#262626"/></svg>
<div class="cb" style="left:804px;top:590px"></div>
<div class="t b" style="left:822px;top:589px;">Reflectivity</div>
<svg class="a" style="left:792px;top:615px" width="7" height="10" viewBox="0 0 7 10"><path d="M0 0v10L7 5z" fill="#262626"/></svg>
<div class="cb" style="left:804px;top:614px"></div>
<div class="t b" style="left:822px;top:613px;">Transparency</div>
<svg class="a" style="left:792px;top:639px" width="7" height="10" viewBox="0 0 7 10"><path d="M0 0v10L7 5z" fill="#262626"/></svg>
<div class="cb" style="left:804px;top:638px"></div>
<div class="t b" style="left:822px;top:637px;">Cutouts</div>
<svg class="a" style="left:791px;top:665px" width="10" height="7" viewBox="0 0 10 7"><path d="M0 0h10L5 7z" fill="#262626"/></svg>
<div class="cb" style="left:804px;top:662px"></div>
<div class="t b" style="left:822px;top:661px;">Self Illumination</div>
<div class="t r " style="left:716px;width:200px;top:680px;">Filter Color</div>
<div class="fld wh" style="left:925px;top:679px;width:615px;">RGB 255 255 255</div>
<div class="dd" style="left:1544px;top:679px"></div>
<div class="t r " style="left:716px;width:200px;top:702px;">Luminance</div>
<div class="fld dim" style="left:925px;top:701px;width:409px;">Custom</div>
<div class="arr" style="left:1321px;top:702px"></div>
<div class="fld" style="left:1336px;top:701px;width:204px;padding:1px 0 0 2px">0.00</div>
<div class="t r " style="left:716px;width:200px;top:724px;">Color Temperature</div>
<div class="fld dim" style="left:925px;top:723px;width:409px;">Custom</div>
<div class="arr" style="left:1321px;top:724px"></div>
<div class="fld" style="left:1336px;top:723px;width:204px;padding:1px 0 0 2px">6,500.00</div>
<svg class="a" style="left:792px;top:753px" width="7" height="10" viewBox="0 0 7 10"><path d="M0 0v10L7 5z" fill="#262626"/></svg>
<div class="cb" style="left:804px;top:752px"><svg width="11" height="11" viewBox="0 0 11 11" style="display:block"><path d="M1.8 5.6L4.5 8.2 9.4 2.8" fill="none" stroke="#1a1a1a" stroke-width="2.2"/></svg></div>
<div class="t b" style="left:822px;top:751px;">Bump</div>
<svg class="a" style="left:792px;top:777px" width="7" height="10" viewBox="0 0 7 10"><path d="M0 0v10L7 5z" fill="#262626"/></svg>
<div class="cb" style="left:804px;top:776px"></div>
<div class="t b" style="left:822px;top:775px;">Tint</div>
<div class="btn" style="left:1372px">OK</div><div class="btn" style="left:1436px">Cancel</div><div class="btn" style="left:1501px;color:#808080;text-shadow:1px 1px 0 #fff">Apply</div>
<svg class="a" style="left:1556px;top:887px" width="13" height="13" viewBox="0 0 13 13"><path d="M1 13L13 1M5 13L13 5M9 13L13 9" stroke="#808080" stroke-width="1.6"/><path d="M0 13L12 1M4 13L12 5M8 13L12 9" stroke="#fff" stroke-width="1"/></svg>
<svg class="a" style="left:16px;top:869px" width="17" height="17" viewBox="0 0 17 17"><g fill="#efefef" stroke="#444" stroke-width="1.1"><rect x="0.6" y="0.6" width="6" height="6.5" rx="1.2"/><rect x="8.6" y="0.6" width="6" height="6.5" rx="1.2"/><rect x="0.6" y="8.6" width="6" height="6.5" rx="1.2"/></g><circle cx="12.2" cy="12.2" r="3.8" fill="#f4f4f4" stroke="#333" stroke-width="1.2"/><path d="M9.8 9.8l4.8 4.8M14.6 9.8l-4.8 4.8" stroke="#333" stroke-width="1"/></svg>
<svg class="a" style="left:49px;top:869px" width="17" height="17" viewBox="0 0 17 17"><rect x="0.7" y="0.7" width="10.6" height="13" rx="1" fill="#f4f4f4" stroke="#3a4456" stroke-width="1.4"/><rect x="2.5" y="2.8" width="4" height="4" fill="#2a5a9a"/><rect x="7.6" y="2.8" width="1.6" height="4" fill="#9aa4b4"/><path d="M2.5 10h4" stroke="#3a4456" stroke-width="1.2"/><path d="M7 15.5l1-3 6-6 2 2-6 6z" fill="#f4b820" stroke="#8a5a10" stroke-width="0.7"/><path d="M13.2 7.3l2 2" stroke="#c04a10" stroke-width="1.4"/></svg>
</body></html>
